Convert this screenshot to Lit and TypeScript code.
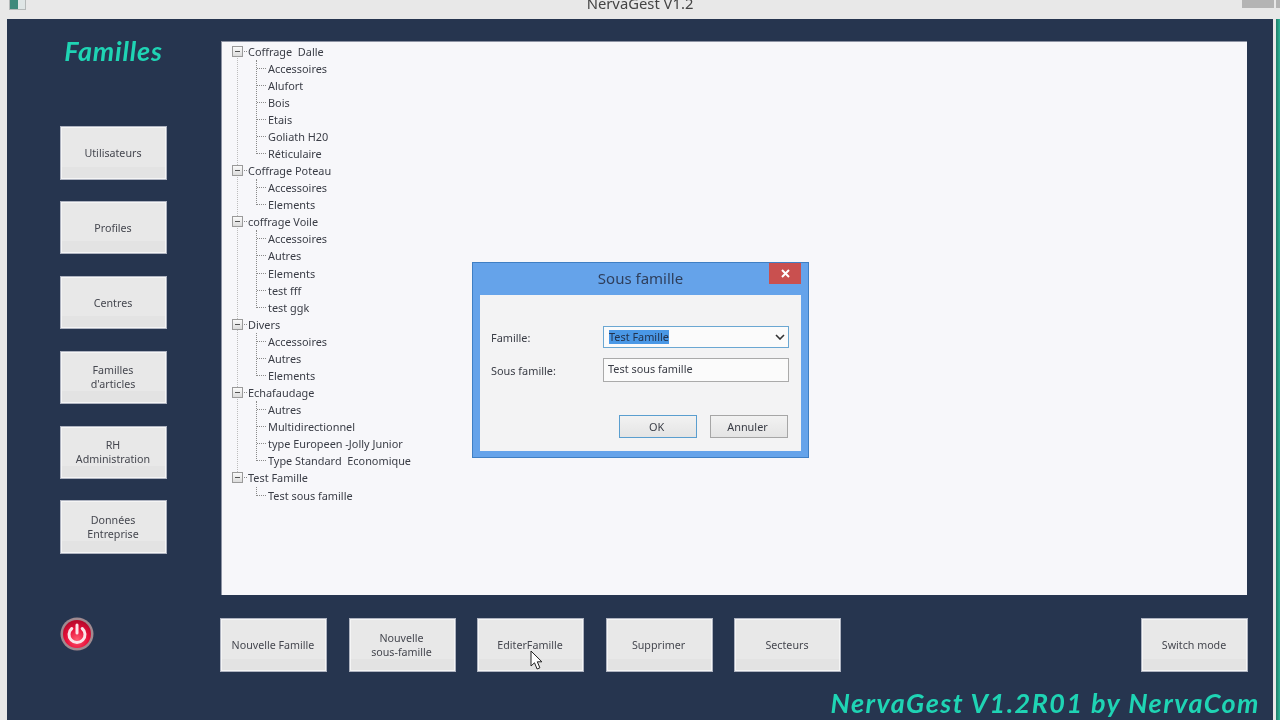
import {LitElement, html, css} from 'lit';
import {customElement} from 'lit/decorators.js';

const TREE = [
  {name: 'Coffrage  Dalle', kids: ['Accessoires', 'Alufort', 'Bois', 'Etais', 'Goliath H20', 'Réticulaire']},
  {name: 'Coffrage Poteau', kids: ['Accessoires', 'Elements']},
  {name: 'coffrage Voile', kids: ['Accessoires', 'Autres', 'Elements', 'test fff', 'test ggk']},
  {name: 'Divers', kids: ['Accessoires', 'Autres', 'Elements']},
  {name: 'Echafaudage', kids: ['Autres', 'Multidirectionnel', 'type Europeen -Jolly Junior', 'Type Standard  Economique']},
  {name: 'Test Famille', kids: ['Test sous famille']},
];

const SIDE = [
  ['Utilisateurs'],
  ['Profiles'],
  ['Centres'],
  ['Familles', "d'articles"],
  ['RH', 'Administration'],
  ['Données', 'Entreprise'],
];

const ACTIONS = [['Nouvelle Famille'], ['Nouvelle', 'sous-famille'], ['EditerFamille'], ['Supprimer'], ['Secteurs']];

@customElement('app-root')
export class AppRoot extends LitElement {
  static styles = css`
    :host {
      display: block;
      width: 1280px;
      height: 720px;
      overflow: hidden;
      position: relative;
      font-family: 'Noto Sans', 'Liberation Sans', sans-serif;
      font-size: 10.9px;
      color: #3a3d46;
      background: #e8e8e8;
      filter: blur(0.35px);
    }

    .titlebar {
      height: 19px;
      display: flex;
      justify-content: center;
      position: relative;
      overflow: hidden;
    }
    .titlebar .caption {
      font-size: 14.8px;
      line-height: 14px;
      margin-top: -4px;
      color: #444;
    }
    .app-icon {
      position: absolute;
      left: 9px;
      top: -6px;
      width: 15px;
      height: 14px;
      background: linear-gradient(90deg, #3f8a7c 0 55%, #dfe6e6 55%);
      border: 1px solid #b5b9b9;
    }
    .win-close {
      position: absolute;
      left: 1242px;
      top: 0;
      width: 32px;
      height: 8px;
      background: #b4b4b4;
    }
    .win-close-2 {
      position: absolute;
      left: 1276px;
      top: 0;
      width: 4px;
      height: 8px;
      background: #b4b4b4;
    }

    .window {
      display: flex;
      height: 701px;
      padding-left: 7px;
    }
    .client {
      width: 1266px;
      background: #26354f;
      display: grid;
      grid-template-columns: 213px 1fr;
      grid-template-rows: 1fr;
    }
    .edge {
      width: 3px;
    }
    .teal {
      width: 4px;
      background: linear-gradient(90deg, #1f7a66, #2fb79a);
    }

    .side {
      display: flex;
      flex-direction: column;
      align-items: flex-start;
      padding-left: 53px;
    }
    .side h1 {
      width: 107px;
      height: 107px;
      margin: 0;
      padding-top: 14px;
      box-sizing: border-box;
      text-align: center;
      font: italic 700 27px/36px 'Lato', sans-serif;
      color: #1fd4b4;
      letter-spacing: 0.8px;
      white-space: nowrap;
    }
    .nav {
      display: flex;
      flex-direction: column;
      gap: 21.4px;
    }

    .btn {
      width: 107px;
      height: 53.5px;
      box-sizing: border-box;
      display: flex;
      flex-direction: column;
      align-items: center;
      justify-content: center;
      border: 1px solid #aeb3c0;
      box-shadow: inset 0 0 0 1px #f5f5f5;
      background: linear-gradient(#e8e8e8 0 76%, #e3e3e3 76%);
      font-size: 10.7px;
      line-height: 14px;
      color: #45474f;
      padding: 0 1px 0 0;
    }

    .power {
      margin: 63.5px 0 0 0;
      width: 34px;
      height: 34px;
    }

    .main {
      display: flex;
      flex-direction: column;
      padding: 22px 25px 0 0;
    }
    .tree {
      height: 554px;
      margin: 0 1px 0 1px;
      box-sizing: border-box;
      padding-top: 0.5px;
      background: #f7f7fa;
      border-left: 1px solid #8d93a3;
      border-top: 1px solid #8d93a3;
    }
    .group {
      position: relative;
    }
    .group::before {
      content: '';
      position: absolute;
      left: 15px;
      top: 8px;
      bottom: -9px;
      border-left: 1px dotted #bdbdbd;
    }
    .group:last-child::before {
      display: none;
    }
    .row {
      display: flex;
      align-items: center;
      height: 17.08px;
      white-space: pre;
      position: relative;
    }
    .root {
      padding-left: 10px;
    }
    .toggle {
      width: 9px;
      height: 9px;
      border: 1px solid #9a9a9a;
      background: linear-gradient(#fafafa, #dcdcdc);
      display: flex;
      align-items: center;
      justify-content: center;
      z-index: 1;
    }
    .toggle::after {
      content: '';
      width: 5px;
      height: 1px;
      background: #555;
    }
    .tick {
      border-top: 1px dotted #8a8a8a;
    }
    .root .tick {
      width: 3px;
      margin: 0 1px;
    }
    .kids {
      position: relative;
    }
    .kids::before {
      content: '';
      position: absolute;
      left: 34px;
      top: 0;
      bottom: 8px;
      border-left: 1px dotted #8a8a8a;
    }
    .kid {
      padding-left: 35px;
    }
    .kid .tick {
      width: 9px;
      margin-right: 2px;
    }

    .actions {
      display: flex;
      gap: 21.5px;
      margin-top: 23px;
    }
    .actions .switch {
      margin-left: auto;
    }
    .brand {
      margin: 16px -12px 0 0;
      text-align: right;
      font: italic 700 27px/30px 'Lato', sans-serif;
      color: #1fd4b4;
      letter-spacing: 1.47px;
      white-space: nowrap;
    }

    .dialog {
      position: absolute;
      left: 472px;
      top: 262px;
      width: 337px;
      height: 196px;
      box-sizing: border-box;
      border: 1px solid #3f7fc4;
      background: #65a3ea;
      padding: 0 7px 6px;
      display: flex;
      flex-direction: column;
    }
    .dialog header {
      height: 29px;
      margin-bottom: 3px;
      display: flex;
      align-items: center;
      justify-content: center;
      font-size: 15px;
      color: #2f3f5c;
    }
    .dialog .close {
      position: absolute;
      left: 296px;
      top: 0;
      width: 32px;
      height: 21px;
      background: #c9504f;
      display: flex;
      align-items: center;
      justify-content: center;
    }
    .dialog .pane {
      flex: 1;
      background: #f3f3f4;
      display: flex;
      flex-direction: column;
      padding: 31px 13px 13px 11px;
    }
    .form {
      display: grid;
      grid-template-columns: 112px 186px;
      grid-template-rows: 22px 24px;
      row-gap: 10px;
      align-items: center;
    }
    .field {
      box-sizing: border-box;
      height: 100%;
      display: flex;
      background: #fbfbfb;
      padding-left: 4px;
    }
    .combo {
      border: 1px solid #6ba7d2;
      align-items: center;
      justify-content: space-between;
      padding-left: 5px;
      padding-right: 3px;
    }
    .combo .sel {
      background: #4a98e6;
      color: #22324d;
      line-height: 14px;
      margin-top: -1px;
    }
    .input {
      border: 1px solid #aaa;
      align-items: flex-start;
      padding-top: 2px;
    }
    .dlg-actions {
      margin-top: auto;
      display: flex;
      justify-content: flex-end;
      gap: 13px;
    }
    .dlg-btn {
      width: 78px;
      height: 23px;
      box-sizing: border-box;
      border: 1px solid #a6a6a6;
      background: linear-gradient(#f2f2f2, #e4e4e4);
      display: flex;
      align-items: center;
      justify-content: center;
      padding-right: 3px;
      color: #3a3d46;
    }
    .dlg-btn.primary {
      border-color: #5a9ecf;
    }

    .cursor {
      position: absolute;
      left: 530px;
      top: 650px;
      width: 14px;
      height: 21px;
    }
  `;

  renderBtn(lines: string[], cls = '') {
    return html`<div class="btn ${cls}">${lines.map((l) => html`<span>${l}</span>`)}</div>`;
  }

  render() {
    return html`
      <div class="titlebar">
        <span class="app-icon"></span>
        <span class="caption">NervaGest V1.2</span>
        <span class="win-close"></span>
        <span class="win-close-2"></span>
      </div>
      <div class="window">
        <div class="client">
          <aside class="side">
            <h1>Familles</h1>
            <nav class="nav">${SIDE.map((s) => this.renderBtn(s))}</nav>
            <svg class="power" viewBox="0 0 34 34">
              <defs>
                <radialGradient id="red" cx="50%" cy="70%" r="65%">
                  <stop offset="0" stop-color="#ff5a70" />
                  <stop offset="0.6" stop-color="#e8103a" />
                  <stop offset="1" stop-color="#b80a2c" />
                </radialGradient>
              </defs>
              <circle cx="17" cy="17" r="16.5" fill="#a08a90" />
              <circle cx="17" cy="17" r="14" fill="url(#red)" />
              <path d="M11.8 11.5a8 8 0 1 0 10.4 0" fill="none" stroke="#fbe4e8" stroke-width="3" stroke-linecap="round" />
              <path d="M17 8v8" fill="none" stroke="#fbe4e8" stroke-width="3" stroke-linecap="round" />
            </svg>
          </aside>
          <section class="main">
            <div class="tree">
              ${TREE.map(
                (g) => html`
                  <div class="group">
                    <div class="row root"><span class="toggle"></span><span class="tick"></span>${g.name}</div>
                    <div class="kids">
                      ${g.kids.map((k) => html`<div class="row kid"><span class="tick"></span>${k}</div>`)}
                    </div>
                  </div>
                `
              )}
            </div>
            <div class="actions">
              ${ACTIONS.map((a) => this.renderBtn(a))}
              ${this.renderBtn(['Switch mode'], 'switch')}
            </div>
            <div class="brand">NervaGest V1.2R01 by NervaCom</div>
          </section>
        </div>
        <div class="edge"></div>
        <div class="teal"></div>
      </div>

      <div class="dialog">
        <header>Sous famille</header>
        <span class="close">
          <svg width="9" height="9" viewBox="0 0 9 9"><path d="M1 1l7 7M8 1l-7 7" stroke="#fff" stroke-width="2" /></svg>
        </span>
        <div class="pane">
          <div class="form">
            <label>Famille:</label>
            <div class="field combo">
              <span class="sel">Test Famille</span>
              <svg width="10" height="6" viewBox="0 0 10 6"><path d="M1 1l4 4 4-4" fill="none" stroke="#333" stroke-width="1.6" /></svg>
            </div>
            <label>Sous famille:</label>
            <div class="field input">Test sous famille</div>
          </div>
          <div class="dlg-actions">
            <div class="dlg-btn primary">OK</div>
            <div class="dlg-btn">Annuler</div>
          </div>
        </div>
      </div>

      <svg class="cursor" viewBox="0 0 14 21">
        <path d="M1 1v15l3.5-3.2 2.6 6.2 2.8-1.2-2.6-6h4.6z" fill="#fff" stroke="#222" stroke-width="1" />
      </svg>
    `;
  }
}
